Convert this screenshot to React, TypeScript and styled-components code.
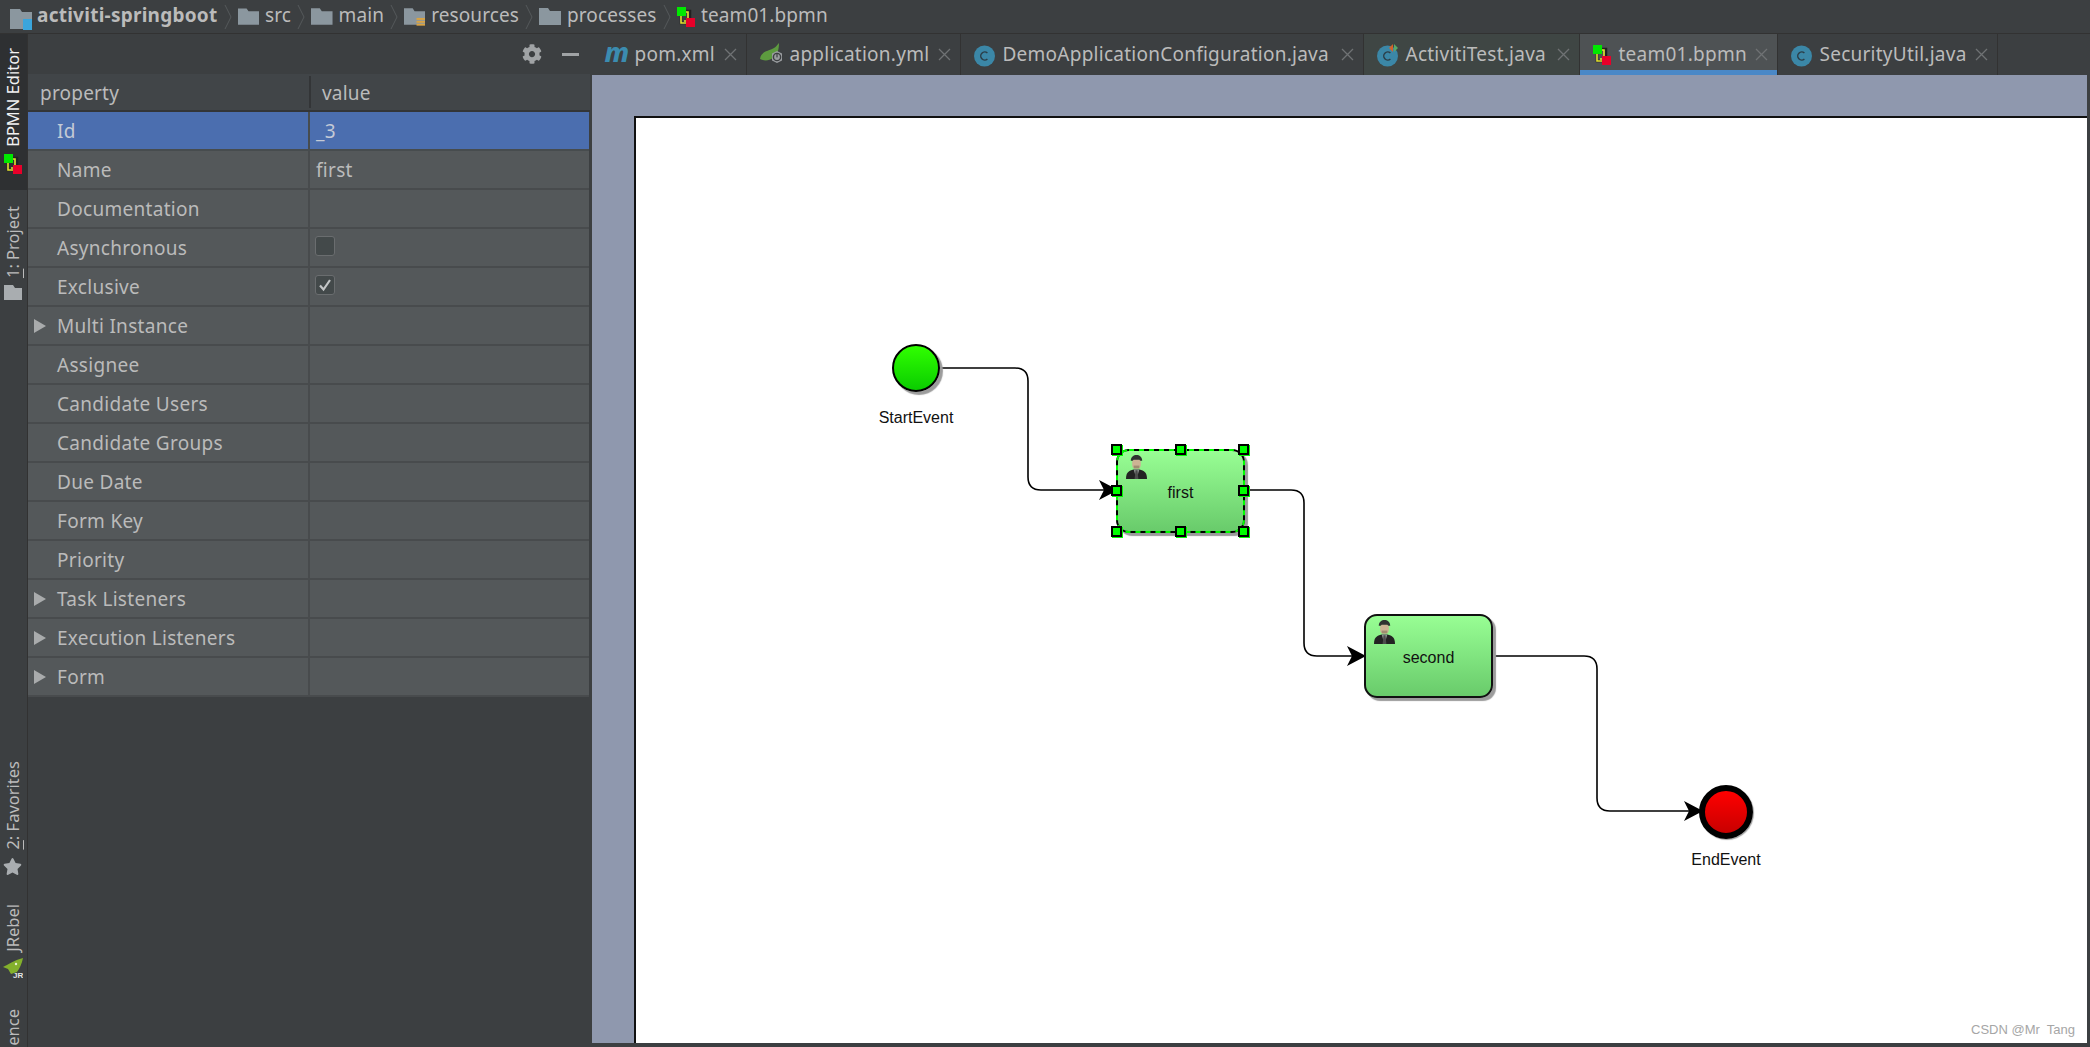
import styled, { createGlobalStyle } from 'styled-components';
import { FaCog, FaStar } from 'react-icons/fa';

const GlobalStyle = createGlobalStyle`
  html, body {
    margin: 0;
    padding: 0;
    background: #3c3f41;
  }
  * {
    box-sizing: border-box;
  }
`;

const UI_FONT = `'Noto Sans', 'Open Sans', sans-serif`;
const DIAGRAM_FONT = `'Liberation Sans', Arial, sans-serif`;

const Page = styled.div`
  width: 2090px;
  height: 1047px;
  display: flex;
  flex-direction: column;
  overflow: hidden;
  background: #3c3f41;
  color: #bbbbbb;
  font-family: ${UI_FONT};
  font-size: 19px;
`;

/* breadcrumb bar */
const Breadcrumbs = styled.div`
  height: 34px;
  flex: none;
  display: flex;
  align-items: center;
  padding-left: 10px;
  border-bottom: 1px solid #323232;
`;

const Crumb = styled.div<{ $width: number }>`
  width: ${(p) => p.$width}px;
  flex: none;
  display: flex;
  align-items: center;
  gap: 6px;
  white-space: nowrap;
`;

const CrumbName = styled.span<{ $bold?: boolean }>`
  font-weight: ${(p) => (p.$bold ? 700 : 400)};
  font-size: 19px;
  line-height: 26px;
  margin-top: -3px;
  margin-left: ${(p) => (p.$bold ? -2 : 0)}px;
  letter-spacing: ${(p) => (p.$bold ? '0.25px' : '0.1px')};
`;

const Chevron = styled.svg`
  width: 8px;
  height: 26px;
  margin-left: auto;
  margin-right: 6px;
  flex: none;
`;

/* main area */
const Main = styled.div`
  flex: 1;
  display: flex;
  min-height: 0;
`;

const Stripe = styled.div`
  width: 28px;
  flex: none;
  display: flex;
  flex-direction: column;
  overflow: hidden;
  border-right: 1px solid #323232;
`;

const StripeItem = styled.div<{ $active?: boolean; $top: number; $height?: number }>`
  flex: none;
  width: 27px;
  height: ${(p) => (p.$height ? `${p.$height}px` : 'auto')};
  margin-top: ${(p) => p.$top}px;
  display: flex;
  flex-direction: column;
  align-items: center;
  gap: 7px;
  background: ${(p) => (p.$active ? '#2e3032' : 'transparent')};
  padding-top: ${(p) => (p.$active ? 14 : 0)}px;
  padding-right: 2px;
`;

const StripeLabel = styled.span<{ $active?: boolean }>`
  writing-mode: vertical-rl;
  transform: rotate(180deg);
  white-space: nowrap;
  font-size: 16.5px;
  line-height: 20px;
  color: ${(p) => (p.$active ? '#f2f2f2' : '#bbbbbb')};
  u {
    text-underline-offset: 2px;
  }
`;

const Panel = styled.div`
  width: 562px;
  flex: none;
  display: flex;
  flex-direction: column;
`;

const PanelToolbar = styled.div`
  height: 40px;
  flex: none;
  display: flex;
  align-items: center;
  justify-content: flex-end;
  gap: 20px;
  padding-right: 11px;
  color: #a0a3a5;
`;

const MinusBar = styled.div`
  width: 17px;
  height: 3px;
  background: #a0a3a5;
`;

const HeaderRow = styled.div`
  height: 38px;
  flex: none;
  display: grid;
  grid-template-columns: 281px 1fr;
  background: #414548;
  border-bottom: 2px solid #333537;
`;

const HeaderCell = styled.div<{ $divided?: boolean }>`
  display: flex;
  align-items: center;
  padding-left: ${(p) => (p.$divided ? 11 : 12)}px;
  padding-top: 2px;
  border-left: ${(p) => (p.$divided ? '2px solid #333537' : 'none')};
  margin: 2px 0;
  letter-spacing: 0.2px;
`;

const Row = styled.div<{ $selected?: boolean }>`
  height: 39px;
  flex: none;
  display: grid;
  grid-template-columns: 280px 1fr;
  column-gap: 2px;
  background: ${(p) => (p.$selected ? '#474c4e' : '#484b4d')};
  padding-bottom: 2px;
  margin-right: 1px;
`;

const Cell = styled.div<{ $selected?: boolean; $indent: number }>`
  position: relative;
  display: flex;
  align-items: center;
  padding-left: ${(p) => p.$indent}px;
  background: ${(p) => (p.$selected ? '#4b6eaf' : '#54585a')};
  color: ${(p) => (p.$selected ? '#c4cad6' : '#bbbbbb')};
  letter-spacing: 0.3px;
`;

const Expander = styled.span`
  position: absolute;
  left: 6px;
  top: 12px;
  width: 0;
  height: 0;
  border-style: solid;
  border-width: 7px 0 7px 12px;
  border-color: transparent transparent transparent #a9abac;
`;

const CheckBox = styled.div`
  width: 20px;
  height: 20px;
  margin-top: -4px;
  margin-left: -1px;
  border: 1px solid #6a6d6f;
  border-radius: 3px;
  background: #43494a;
  display: flex;
  align-items: center;
  justify-content: center;
`;

/* editor */
const Editor = styled.div`
  flex: 1;
  min-width: 0;
  display: flex;
  flex-direction: column;
  padding-left: 2px;
`;

const TabBar = styled.div`
  height: 41px;
  flex: none;
  display: flex;
`;

const Tab = styled.div<{ $width: number; $active?: boolean; $tint?: boolean }>`
  position: relative;
  width: ${(p) => p.$width}px;
  flex: none;
  display: flex;
  align-items: center;
  padding-left: 12.5px;
  gap: 8px;
  white-space: nowrap;
  border-right: 1px solid #323232;
  background: ${(p) => (p.$active ? '#4e5254' : p.$tint ? '#3f4644' : 'transparent')};
`;

const TabName = styled.span`
  letter-spacing: 0.25px;
  line-height: 26px;
  margin-top: -1px;
`;

const TabClose = styled.svg`
  position: absolute;
  right: 9px;
  top: 14px;
  width: 13px;
  height: 13px;
`;

const ActiveMark = styled.div`
  position: absolute;
  left: 0;
  right: 0;
  bottom: 0;
  height: 5px;
  background: #4a88c7;
`;

const MavenGlyph = styled.span`
  width: 22px;
  flex: none;
  font-style: italic;
  font-weight: 800;
  font-size: 27px;
  line-height: 26px;
  margin-top: -6px;
  color: #3b8cb0;
  letter-spacing: -1px;
`;

const Viewport = styled.div`
  flex: 1;
  min-height: 0;
  display: flex;
  background: #8f98ae;
  padding: 41px 3px 4px 42px;
  box-shadow: inset 0 -4px 0 #3c3f41, inset -3px 0 0 #3c3f41;
`;

const Canvas = styled.div`
  position: relative;
  flex: 1;
  background: #ffffff;
  border-top: 2px solid #111111;
  border-left: 2px solid #111111;
  font-family: ${DIAGRAM_FONT};
  font-size: 16px;
  color: #111111;
`;

const EdgeLayer = styled.svg`
  position: absolute;
  left: 0;
  top: 0;
  width: 100%;
  height: 100%;
`;

const EventNode = styled.div<{ $x: number; $y: number; $end?: boolean }>`
  position: absolute;
  left: ${(p) => p.$x}px;
  top: ${(p) => p.$y}px;
  width: ${(p) => (p.$end ? 54 : 48)}px;
  height: ${(p) => (p.$end ? 54 : 48)}px;
  border-radius: 50%;
  border: ${(p) => (p.$end ? '6px solid #000000' : '2px solid #000000')};
  background: ${(p) =>
    p.$end
      ? 'linear-gradient(#ff0000, #c80000)'
      : 'linear-gradient(#30ff00, #0acc00)'};
  box-shadow: ${(p) =>
    p.$end ? '1px 1px 1px #a0a0a0' : '3px 3px 1px #9c9c9c'};
`;

const NodeCaption = styled.div<{ $gap: number }>`
  position: absolute;
  left: 50%;
  top: 100%;
  transform: translateX(-50%);
  margin-top: ${(p) => p.$gap}px;
  white-space: nowrap;
  line-height: 20px;
`;

const TaskNode = styled.div<{ $x: number; $y: number; $selected?: boolean }>`
  position: absolute;
  left: ${(p) => p.$x}px;
  top: ${(p) => p.$y}px;
  width: 129px;
  height: 84px;
  border-radius: 13px;
  border: 2px solid ${(p) => (p.$selected ? 'transparent' : '#111111')};
  background: linear-gradient(#98fe94, #69cb6b);
  background-clip: ${(p) => (p.$selected ? 'padding-box' : 'border-box')};
  box-shadow: 3px 3px 1px #9c9c9c;
  display: flex;
  align-items: center;
  justify-content: center;
  padding-top: 4px;
`;

const PersonIcon = styled.svg`
  position: absolute;
  left: 8px;
  top: 4px;
  width: 21px;
  height: 25px;
`;

const SelectionOutline = styled.svg`
  position: absolute;
  left: -2px;
  top: -2px;
  width: 129px;
  height: 84px;
  overflow: visible;
`;

const Handle = styled.div<{ $x: number; $y: number }>`
  position: absolute;
  left: ${(p) => p.$x}px;
  top: ${(p) => p.$y}px;
  width: 11px;
  height: 11px;
  background: #00ff00;
  border: 2px solid #000000;
  box-shadow: 1px 1px 0 #00ff00;
`;

const Watermark = styled.div`
  position: absolute;
  right: 12px;
  bottom: 4px;
  font-size: 13px;
  line-height: 18px;
  color: #a6a6a6;
  white-space: pre;
`;

function FolderIcon({ withLines }: { withLines?: boolean }) {
  return (
    <svg width="22" height="22" viewBox="0 0 22 22">
      <path d="M0 2h9l2 3h11v14H0z" fill="#8b979f" />
      {withLines && (
        <g fill="#d9a343">
          <rect x="13" y="12" width="9" height="2" />
          <rect x="13" y="15" width="9" height="2" />
          <rect x="13" y="18" width="9" height="2" />
        </g>
      )}
    </svg>
  );
}

function ProjectIcon() {
  return (
    <svg width="24" height="26" viewBox="0 0 24 26" style={{ marginTop: 4, marginLeft: -1 }}>
      <path d="M1 3h10l2 3h10v17H1z" fill="#8b979f" />
      <rect x="14" y="13" width="9" height="11" fill="#3aa5dc" />
    </svg>
  );
}

function BpmnIcon() {
  return (
    <svg width="18" height="20" viewBox="0 0 18 20" style={{ flex: 'none' }}>
      <rect x="4" y="4" width="9" height="12" fill="none" stroke="#222" strokeWidth="2.5" />
      <path d="M7 5h4v9h-4" fill="none" stroke="#e4e430" strokeWidth="1.6" />
      <path d="M4 9v7h6" fill="none" stroke="#e4e430" strokeWidth="1.6" />
      <rect x="0" y="0" width="9" height="9" fill="#00e800" />
      <rect x="9" y="11" width="9" height="9" fill="#e8002a" />
    </svg>
  );
}

function SpringIcon() {
  return (
    <svg width="22" height="26" viewBox="0 0 22 26" style={{ flex: 'none' }}>
      <path d="M0 17C1 9 9 9 14 6c2-1 4-4 5-5 0 5-1 12-6 15-4 3-9 3-13 1z" fill="#5d9b3f" />
      <path d="M12 11.5l5-2.5 5 2.5v7l-5 2.5-5-2.5z" fill="#9a9da0" />
      <circle cx="17" cy="15" r="3.6" fill="none" stroke="#3c3f41" strokeWidth="1.4" />
      <rect x="16.4" y="12" width="1.2" height="3.4" fill="#3c3f41" />
    </svg>
  );
}

function ClassIcon({ marked }: { marked?: boolean }) {
  return (
    <svg width="21" height="24" viewBox="0 0 21 24" style={{ flex: 'none' }}>
      <circle cx="10.5" cy="13" r="10.5" fill="#3b87a7" />
      <path d="M13.4 10a4 4 0 1 0 0 6" fill="none" stroke="#2b3e48" strokeWidth="1.5" />
      {marked && (
        <g>
          <path d="M12 5l4-4v8z" fill="#d2622a" />
          <path d="M17 1l4 4-4 4z" fill="#59a869" />
        </g>
      )}
    </svg>
  );
}

function CloseGlyph() {
  return (
    <TabClose viewBox="0 0 13 13">
      <path d="M1 1l11 11M12 1L1 12" stroke="#6f7274" strokeWidth="1.3" />
    </TabClose>
  );
}

function CrumbChevron() {
  return (
    <Chevron viewBox="0 0 8 26">
      <path d="M1 1l6 12-6 12" fill="none" stroke="#55595b" strokeWidth="1" />
    </Chevron>
  );
}

function Person() {
  return (
    <PersonIcon viewBox="0 0 22 26">
      <path d="M0 25c0-7 3-9 8-10h6c5 1 8 3 8 10z" fill="#232323" />
      <path d="M8 15l3 10 3-10z" fill="#8c8f8f" />
      <path d="M10 16h2l1 9h-4z" fill="#4c4c4c" />
      <rect x="6.5" y="4" width="9" height="10" rx="3.5" fill="#cdb394" />
      <rect x="8" y="11" width="6" height="3" fill="#a08c70" />
      <path d="M5 6c0-4 3-6 6-6s6 2 6 6l-2 0-1-1h-6l-1 1z" fill="#2f3230" />
    </PersonIcon>
  );
}

function Arrow({ x, y }: { x: number; y: number }) {
  return (
    <path
      d={`M${x} ${y}L${x - 19} ${y - 10}L${x - 14} ${y}L${x - 19} ${y + 10}Z`}
      fill="#000000"
    />
  );
}

const ORIGIN_X = 636;
const ORIGIN_Y = 118;

const PROPERTIES: { name: string; value?: string; expandable?: boolean; check?: boolean; checked?: boolean }[] = [
  { name: 'Id', value: '_3' },
  { name: 'Name', value: 'first' },
  { name: 'Documentation' },
  { name: 'Asynchronous', check: true },
  { name: 'Exclusive', check: true, checked: true },
  { name: 'Multi Instance', expandable: true },
  { name: 'Assignee' },
  { name: 'Candidate Users' },
  { name: 'Candidate Groups' },
  { name: 'Due Date' },
  { name: 'Form Key' },
  { name: 'Priority' },
  { name: 'Task Listeners', expandable: true },
  { name: 'Execution Listeners', expandable: true },
  { name: 'Form', expandable: true },
];

const HANDLES = [
  [-7, -7],
  [57, -7],
  [120, -7],
  [-7, 34],
  [120, 34],
  [-7, 75],
  [57, 75],
  [120, 75],
];

export default function App() {
  return (
    <Page>
      <GlobalStyle />
      <Breadcrumbs>
        <Crumb $width={228}>
          <ProjectIcon />
          <CrumbName $bold>activiti-springboot</CrumbName>
          <CrumbChevron />
        </Crumb>
        <Crumb $width={73}>
          <FolderIcon />
          <CrumbName>src</CrumbName>
          <CrumbChevron />
        </Crumb>
        <Crumb $width={93}>
          <FolderIcon />
          <CrumbName>main</CrumbName>
          <CrumbChevron />
        </Crumb>
        <Crumb $width={135}>
          <FolderIcon withLines />
          <CrumbName>resources</CrumbName>
          <CrumbChevron />
        </Crumb>
        <Crumb $width={138}>
          <FolderIcon />
          <CrumbName>processes</CrumbName>
          <CrumbChevron />
        </Crumb>
        <Crumb $width={200}>
          <BpmnIcon />
          <CrumbName>team01.bpmn</CrumbName>
        </Crumb>
      </Breadcrumbs>
      <Main>
        <Stripe>
          <StripeItem $active $top={0} $height={156}>
            <StripeLabel $active>BPMN Editor</StripeLabel>
            <BpmnIcon />
          </StripeItem>
          <StripeItem $top={16}>
            <StripeLabel>
              <u>1</u>: Project
            </StripeLabel>
            <svg width="18" height="15" viewBox="0 0 18 15">
              <path d="M0 0h9l2 3h7v12H0z" fill="#a9adb0" />
            </svg>
          </StripeItem>
          <StripeItem $top={461}>
            <StripeLabel>
              <u>2</u>: Favorites
            </StripeLabel>
            <FaStar size={19} color="#a9adb0" />
          </StripeItem>
          <StripeItem $top={28}>
            <StripeLabel>JRebel</StripeLabel>
            <svg width="20" height="21" viewBox="0 0 20 21">
              <path d="M0 9c5-2 11-7 20-9-1 6-4 11-6 14l-6 2-3-5z" fill="#83b02c" />
              <circle cx="13" cy="6" r="1.2" fill="#e8f0d0" />
              <text x="10" y="20" fontSize="8" fontWeight="700" fill="#e4e4e4" fontFamily="Liberation Sans">
                JR
              </text>
            </svg>
          </StripeItem>
          <StripeItem $top={30}>
            <StripeLabel>ence</StripeLabel>
          </StripeItem>
        </Stripe>
        <Panel>
          <PanelToolbar>
            <FaCog size={20} />
            <MinusBar />
          </PanelToolbar>
          <HeaderRow>
            <HeaderCell>property</HeaderCell>
            <HeaderCell $divided>value</HeaderCell>
          </HeaderRow>
          {PROPERTIES.map((prop) => (
            <Row key={prop.name} $selected={prop.name === 'Id'}>
              <Cell $indent={29} $selected={prop.name === 'Id'}>
                {prop.expandable && <Expander />}
                {prop.name}
              </Cell>
              <Cell $indent={6} $selected={prop.name === 'Id'}>
                {prop.check ? (
                  <CheckBox>
                    {prop.checked && (
                      <svg width="14" height="14" viewBox="0 0 14 14">
                        <path d="M2 7.5l3.5 4L12 2" fill="none" stroke="#c4c6c7" strokeWidth="2.2" />
                      </svg>
                    )}
                  </CheckBox>
                ) : (
                  prop.value
                )}
              </Cell>
            </Row>
          ))}
        </Panel>
        <Editor>
          <TabBar>
            <Tab $width={155}>
              <MavenGlyph>m</MavenGlyph>
              <TabName>pom.xml</TabName>
              <CloseGlyph />
            </Tab>
            <Tab $width={214}>
              <SpringIcon />
              <TabName>application.yml</TabName>
              <CloseGlyph />
            </Tab>
            <Tab $width={403}>
              <ClassIcon />
              <TabName>DemoApplicationConfiguration.java</TabName>
              <CloseGlyph />
            </Tab>
            <Tab $width={216} $tint>
              <ClassIcon marked />
              <TabName>ActivitiTest.java</TabName>
              <CloseGlyph />
            </Tab>
            <Tab $width={198} $active>
              <BpmnIcon />
              <TabName>team01.bpmn</TabName>
              <CloseGlyph />
              <ActiveMark />
            </Tab>
            <Tab $width={220}>
              <ClassIcon />
              <TabName>SecurityUtil.java</TabName>
              <CloseGlyph />
            </Tab>
          </TabBar>
          <Viewport>
            <Canvas>
              <EdgeLayer>
                <g
                  transform={`translate(${-ORIGIN_X} ${-ORIGIN_Y})`}
                  fill="none"
                  stroke="#000000"
                  strokeWidth="1.6"
                >
                  <path d="M941 368H1015Q1028 368 1028 381V477Q1028 490 1041 490H1106" />
                  <path d="M1245 490H1291Q1304 490 1304 503V643Q1304 656 1317 656H1355" />
                  <path d="M1493 656H1584Q1597 656 1597 669V798Q1597 811 1610 811H1692" />
                </g>
                <g transform={`translate(${-ORIGIN_X} ${-ORIGIN_Y})`}>
                  <Arrow x={1118} y={490} />
                  <Arrow x={1366} y={656} />
                  <Arrow x={1703} y={811} />
                </g>
              </EdgeLayer>
              <EventNode $x={916 - 24 - ORIGIN_X} $y={368 - 24 - ORIGIN_Y}>
                <NodeCaption $gap={18}>StartEvent</NodeCaption>
              </EventNode>
              <TaskNode $x={1116 - ORIGIN_X} $y={449 - ORIGIN_Y} $selected>
                <SelectionOutline viewBox="0 0 129 84">
                  <rect x="1" y="1" width="127" height="82" rx="12" fill="none" stroke="#000000" strokeWidth="2" />
                  <rect
                    x="1"
                    y="1"
                    width="127"
                    height="82"
                    rx="12"
                    fill="none"
                    stroke="#00ff00"
                    strokeWidth="2"
                    strokeDasharray="5 5"
                  />
                </SelectionOutline>
                <Person />
                first
                {HANDLES.map(([x, y]) => (
                  <Handle key={`${x}-${y}`} $x={x} $y={y} />
                ))}
              </TaskNode>
              <TaskNode $x={1364 - ORIGIN_X} $y={614 - ORIGIN_Y}>
                <Person />
                second
              </TaskNode>
              <EventNode $end $x={1726 - 27 - ORIGIN_X} $y={812 - 27 - ORIGIN_Y}>
                <NodeCaption $gap={17}>EndEvent</NodeCaption>
              </EventNode>
              <Watermark>{'CSDN @Mr  Tang'}</Watermark>
            </Canvas>
          </Viewport>
        </Editor>
      </Main>
    </Page>
  );
}
